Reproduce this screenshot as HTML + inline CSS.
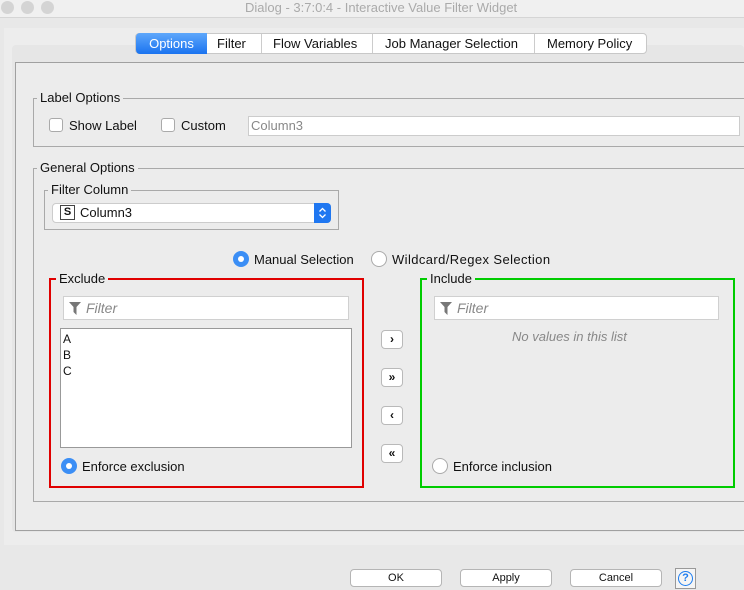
<!DOCTYPE html>
<html><head><style>
*{box-sizing:border-box;margin:0;padding:0}
body{width:744px;height:590px;background:#e8e8e8;font-family:"Liberation Sans",sans-serif;font-size:13px;color:#111;position:relative;overflow:hidden}
.a{position:absolute}
.gb{position:absolute;border:1px solid #a9a9a9}
.lg{position:absolute;background:#ececec;padding:0 3px;font-size:13px}
.cb{position:absolute;width:14px;height:14px;border:1px solid #aaa;border-radius:3px;background:#fff}
.btn{position:absolute;width:22px;height:19px;border:1px solid #b9b9b9;border-radius:4px;background:#fff;font-size:12px;font-weight:bold;text-align:center;line-height:17px}
.pb{position:absolute;height:18px;border:1px solid #b5b5b5;border-radius:4px;background:#fff;font-size:11px;text-align:center;line-height:16px;width:92px}
.fi{position:absolute;height:24px;background:#fff;border:1px solid #d0d0d0;color:#888;font-style:italic;font-size:14px;line-height:22px;padding-left:22px}
.rad{position:absolute;width:16px;height:16px;border-radius:50%}
</style></head><body>
<div class="a" style="left:0;top:0;width:744px;height:18px;background:#f0f0f0;border-bottom:1px solid #d5d5d5"></div>
<div class="a" style="left:1px;top:1px;width:13px;height:13px;border-radius:50%;background:#d4d4d4"></div>
<div class="a" style="left:21px;top:1px;width:13px;height:13px;border-radius:50%;background:#d4d4d4"></div>
<div class="a" style="left:41px;top:1px;width:13px;height:13px;border-radius:50%;background:#d4d4d4"></div>
<div class="a" style="left:245px;top:0px;font-size:13px;color:#aaa">Dialog - 3:7:0:4 - Interactive Value Filter Widget</div>
<div class="a" style="left:4px;top:28px;width:740px;height:517px;background:#ededed"></div>
<div class="a" style="left:12px;top:45px;width:732px;height:487px;background:#e6e6e6;border-radius:4px"></div>
<div class="gb" style="left:15px;top:62px;width:735px;height:469px;background:#ececec;border-color:#a0a0a0"></div>
<div class="a" style="left:135px;top:33px;width:512px;height:21px;background:#fff;border:1px solid #c8c8c8;border-radius:4px;font-size:13px;line-height:19px">
<span class="a" style="left:0;top:-1px;width:71px;height:21px;background:linear-gradient(#5ea7fb,#1a73f0);color:#fff;border-radius:4px 0 0 4px;text-align:center;line-height:21px">Options</span>
<span class="a" style="left:81px">Filter</span><span class="a" style="left:125px;top:0;height:19px;border-left:1px solid #ccc"></span>
<span class="a" style="left:137px">Flow Variables</span><span class="a" style="left:236px;top:0;height:19px;border-left:1px solid #ccc"></span>
<span class="a" style="left:249px">Job Manager Selection</span><span class="a" style="left:398px;top:0;height:19px;border-left:1px solid #ccc"></span>
<span class="a" style="left:411px">Memory Policy</span></div>

<div class="gb" style="left:33px;top:98px;width:720px;height:49px"></div>
<div class="lg" style="left:37px;top:90px">Label Options</div>
<div class="cb" style="left:49px;top:118px"></div><div class="a" style="left:69px;top:118px">Show Label</div>
<div class="cb" style="left:161px;top:118px"></div><div class="a" style="left:181px;top:118px">Custom</div>
<div class="a" style="left:248px;top:116px;width:492px;height:20px;background:#fff;border:1px solid #ccc;color:#888;padding-left:2px;line-height:18px">Column3</div>

<div class="gb" style="left:33px;top:168px;width:720px;height:334px"></div>
<div class="lg" style="left:37px;top:160px">General Options</div>
<div class="gb" style="left:44px;top:190px;width:295px;height:40px"></div>
<div class="lg" style="left:48px;top:182px">Filter Column</div>
<div class="a" style="left:52px;top:203px;width:279px;height:20px;background:#fff;border:1px solid #ccc;border-radius:4px"></div>
<div class="a" style="left:60px;top:205px;width:15px;height:15px;border:1px solid #444;font-size:11px;font-weight:bold;text-align:center;line-height:13px">S</div>
<div class="a" style="left:80px;top:205px">Column3</div>
<div class="a" style="left:314px;top:203px;width:17px;height:20px;background:#1f77f1;border-radius:0 4px 4px 0"><svg width="17" height="20"><path d="M5.5 8.5L8.5 5.5L11.5 8.5M5.5 11.5L8.5 14.5L11.5 11.5" stroke="#fff" stroke-width="1.3" fill="none"/></svg></div>

<div class="rad" style="left:233px;top:251px;background:#3b8ef5"><div class="a" style="left:5px;top:5px;width:6px;height:6px;border-radius:50%;background:#fff"></div></div>
<div class="a" style="left:254px;top:252px">Manual Selection</div>
<div class="rad" style="left:371px;top:251px;background:#fff;border:1px solid #aaa"></div>
<div class="a" style="left:392px;top:252px;letter-spacing:0.4px">Wildcard/Regex Selection</div>

<div class="a" style="left:49px;top:278px;width:315px;height:210px;border:2px solid #e00000"></div>
<div class="lg" style="left:56px;top:271px">Exclude</div>
<div class="fi" style="left:63px;top:296px;width:286px">Filter</div>
<svg class="a" style="left:68px;top:300px" width="14" height="16"><path d="M1 2H13L8.5 7V15L5.5 12V7Z" fill="#777"/></svg>
<div class="a" style="left:60px;top:328px;width:292px;height:120px;background:#fff;border:1px solid #999;padding:2px 2px;font-size:12px;line-height:16px">A<br>B<br>C</div>
<div class="rad" style="left:61px;top:458px;background:#3b8ef5"><div class="a" style="left:5px;top:5px;width:6px;height:6px;border-radius:50%;background:#fff"></div></div>
<div class="a" style="left:82px;top:459px">Enforce exclusion</div>

<div class="btn" style="left:381px;top:330px">›</div>
<div class="btn" style="left:381px;top:368px">»</div>
<div class="btn" style="left:381px;top:406px">‹</div>
<div class="btn" style="left:381px;top:444px">«</div>

<div class="a" style="left:420px;top:278px;width:315px;height:210px;border:2px solid #00cc00"></div>
<div class="lg" style="left:427px;top:271px">Include</div>
<div class="fi" style="left:434px;top:296px;width:285px">Filter</div>
<svg class="a" style="left:439px;top:300px" width="14" height="16"><path d="M1 2H13L8.5 7V15L5.5 12V7Z" fill="#777"/></svg>
<div class="a" style="left:512px;top:329px;color:#888;font-style:italic">No values in this list</div>
<div class="rad" style="left:432px;top:458px;background:#fff;border:1px solid #aaa"></div>
<div class="a" style="left:453px;top:459px">Enforce inclusion</div>

<div class="pb" style="left:350px;top:569px">OK</div>
<div class="pb" style="left:460px;top:569px">Apply</div>
<div class="pb" style="left:570px;top:569px">Cancel</div>
<div class="a" style="left:675px;top:568px;width:21px;height:21px;border:1px solid #999;background:#f5f5f5"><div class="a" style="left:2px;top:2px;width:15px;height:15px;border:1.5px solid #1c7cf0;border-radius:50%;color:#1c7cf0;font-size:11px;font-weight:bold;text-align:center;line-height:13px">?</div></div>
</body></html>
